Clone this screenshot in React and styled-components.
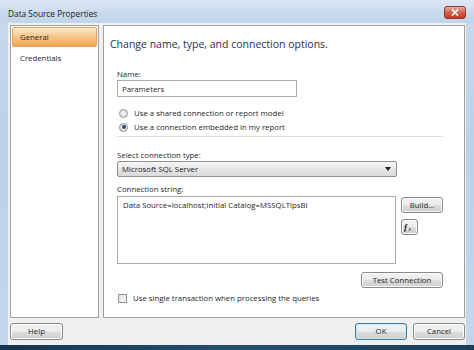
import React from "react";
import styled, { createGlobalStyle } from "styled-components";

const Global = createGlobalStyle`
  html, body { margin: 0; padding: 0; background: #1f3a52; }
  body { font-family: "Open Sans", "Noto Sans", sans-serif; }
`;

const Window = styled.div`
  width: 474px;
  height: 350px;
  display: flex;
  flex-direction: column;
  background: linear-gradient(180deg, #c9d9ec 0%, #bcd2ea 40%, #c3d6ec 100%);
  overflow: hidden;
`;

const TitleBar = styled.div`
  height: 23px;
  display: flex;
  align-items: center;
  justify-content: space-between;
  padding: 0 8px 0 8px;
  background: linear-gradient(180deg, #dde8f4 0%, #c9d9eb 60%, #c1d4e9 100%);
  box-sizing: border-box;
`;

const Title = styled.span`
  font-size: 8.3px;
  color: #1b1b1b;
  margin-top: 3px;
`;

const CloseBtn = styled.div`
  width: 20px;
  height: 11px;
  margin-top: 2px;
  border-radius: 3px;
  border: 1px solid #8c3a32;
  background: linear-gradient(180deg, #e8a89c 0%, #d4624f 50%, #c0392b 100%);
  display: flex;
  align-items: center;
  justify-content: center;
`;

const Client = styled.div`
  flex: 1;
  margin: 0 8px;
  background: #f0f0f0;
  display: flex;
  flex-direction: column;
  padding: 2px 1px 0 2px;
  box-sizing: border-box;
`;

const MainRow = styled.div`
  display: flex;
  gap: 4px;
  height: 293px;
`;

const Sidebar = styled.div`
  width: 90px;
  background: #fff;
  border: 1px solid #a0a0a0;
  box-sizing: border-box;
  padding: 1px;
  display: flex;
  flex-direction: column;
`;

const NavItem = styled.div`
  height: 18px;
  display: flex;
  align-items: center;
  padding-left: 7px;
  font-size: 7.8px;
  color: #1e1e1e;
  border: 1px solid ${(p) => (p.$active ? "#e3a15c" : "transparent")};
  border-radius: 2px;
  background: ${(p) =>
    p.$active
      ? "linear-gradient(180deg, #fdebd2 0%, #f9c98e 45%, #f4a452 100%)"
      : "transparent"};
  margin-bottom: 1px;
`;

const Content = styled.div`
  flex: 1;
  background: #fff;
  border: 1px solid #a0a0a0;
  box-sizing: border-box;
  padding: 10px 0 0 6px;
  display: flex;
  flex-direction: column;
`;

const Heading = styled.div`
  font-size: 10.5px;
  color: #1e3250;
  height: 16px;
  line-height: 16px;
`;

const Form = styled.div`
  padding-left: 7px;
  padding-right: 21px;
  display: flex;
  flex-direction: column;
`;

const Label = styled.div`
  font-size: 7.8px;
  color: #1e1e1e;
  height: 10px;
  line-height: 10px;
  margin-top: ${(p) => p.$mt || 0}px;
  margin-bottom: ${(p) => p.$mb || 1}px;
`;

const TextBox = styled.div`
  width: 180px;
  height: 17px;
  border: 1px solid #abadb3;
  box-sizing: border-box;
  font-size: 7.8px;
  padding-left: 4px;
  display: flex;
  align-items: center;
  color: #1e1e1e;
`;

const RadioRow = styled.div`
  display: flex;
  align-items: center;
  height: 14px;
  font-size: 7.8px;
  color: #1e1e1e;
  gap: 6px;
  margin-top: ${(p) => p.$mt || 0}px;
  padding-left: 2px;
`;

const RadioDot = styled.span`
  width: 9px;
  height: 9px;
  border-radius: 50%;
  border: 1px solid #8e8f8f;
  box-sizing: border-box;
  background: radial-gradient(circle, #f4f4f4 0%, #dcdcdc 100%);
  display: flex;
  align-items: center;
  justify-content: center;
  &::after {
    content: "";
    width: 4px;
    height: 4px;
    border-radius: 50%;
    background: ${(p) => (p.$checked ? "#2a4c74" : "transparent")};
  }
`;

const Separator = styled.div`
  height: 1px;
  background: #d5dfe5;
  margin-top: 2px;
`;

const Select = styled.div`
  width: 280px;
  height: 16px;
  border: 1px solid #8e8f8f;
  box-sizing: border-box;
  border-radius: 2px;
  background: linear-gradient(180deg, #f6f6f6 0%, #e6e6e6 50%, #dadada 100%);
  font-size: 7.8px;
  color: #1e1e1e;
  display: flex;
  align-items: center;
  justify-content: space-between;
  padding: 0 5px 0 4px;
`;

const ConnRow = styled.div`
  display: flex;
  gap: 5px;
  align-items: flex-start;
`;

const TextArea = styled.div`
  width: 279px;
  height: 68px;
  border: 1px solid #abadb3;
  box-sizing: border-box;
  font-size: 7.8px;
  color: #1e1e1e;
  padding: 3px 5px;
`;

const SideButtons = styled.div`
  display: flex;
  flex-direction: column;
  gap: 6px;
  padding-top: 1px;
`;

const Button = styled.button`
  width: ${(p) => p.$w}px;
  height: ${(p) => p.$h || 17}px;
  padding: 0;
  font-family: inherit;
  font-size: 7.8px;
  color: #1e1e1e;
  border: 1px solid ${(p) => (p.$default ? "#3d7bad" : "#8a8a8a")};
  border-radius: 3px;
  background: linear-gradient(180deg, #f3f3f3 0%, #ebebeb 50%, #dddddd 51%, #cfcfcf 100%);
  box-shadow: inset 0 0 0 1px ${(p) => (p.$default ? "#c8e6f8" : "#fbfbfb")};
  display: flex;
  align-items: center;
  justify-content: center;
`;

const TestRow = styled.div`
  display: flex;
  justify-content: flex-end;
  margin-top: 8px;
`;

const CheckRow = styled.div`
  display: flex;
  align-items: center;
  gap: 6px;
  height: 12px;
  font-size: 7.8px;
  color: #1e1e1e;
  margin-top: 4px;
  padding-left: 1px;
`;

const CheckBox = styled.span`
  width: 9px;
  height: 9px;
  border: 1px solid #8e8f8f;
  box-sizing: border-box;
  background: linear-gradient(135deg, #e2e2e2, #f8f8f8);
`;

const Footer = styled.div`
  display: flex;
  align-items: center;
  justify-content: space-between;
  height: 24px;
  margin-top: 1px;
`;

const FooterRight = styled.div`
  display: flex;
  gap: 6px;
`;

const Taskbar = styled.div`
  height: 5px;
  background: linear-gradient(90deg, #17344d, #23506f 50%, #1c3d58);
`;

export default function App() {
  return (
    <>
      <Global />
      <Window>
        <TitleBar>
          <Title>Data Source Properties</Title>
          <CloseBtn>
            <svg width="8" height="7" viewBox="0 0 8 7">
              <path d="M1 0.5 L7 6.5 M7 0.5 L1 6.5" stroke="#fff" strokeWidth="1.6" />
            </svg>
          </CloseBtn>
        </TitleBar>
        <Client>
          <MainRow>
            <Sidebar>
              <NavItem $active>General</NavItem>
              <NavItem>Credentials</NavItem>
            </Sidebar>
            <Content>
              <Heading>Change name, type, and connection options.</Heading>
              <Form>
                <Label $mt={17}>Name:</Label>
                <TextBox>Parameters</TextBox>
                <RadioRow $mt={9}>
                  <RadioDot />
                  Use a shared connection or report model
                </RadioRow>
                <RadioRow>
                  <RadioDot $checked />
                  Use a connection embedded in my report
                </RadioRow>
                <Separator />
                <Label $mt={13}>Select connection type:</Label>
                <Select>
                  <span>Microsoft SQL Server</span>
                  <svg width="6" height="4" viewBox="0 0 6 4">
                    <path d="M0 0 H6 L3 4 Z" fill="#1e1e1e" />
                  </svg>
                </Select>
                <Label $mt={7} $mb={2}>Connection string:</Label>
                <ConnRow>
                  <TextArea>Data Source=localhost;Initial Catalog=MSSQLTipsBI</TextArea>
                  <SideButtons>
                    <Button $w={42} $h={16}>Build...</Button>
                    <Button $w={17} $h={16}>
                      <svg width="11" height="10" viewBox="0 0 11 10">
                        <text x="0" y="8" fontFamily="Liberation Serif, serif" fontStyle="italic" fontWeight="bold" fontSize="9" fill="#1e1e1e">f</text>
                        <text x="4.5" y="9" fontFamily="Liberation Serif, serif" fontStyle="italic" fontSize="5.5" fill="#1e1e1e">x</text>
                      </svg>
                    </Button>
                  </SideButtons>
                </ConnRow>
                <TestRow>
                  <Button $w={82} $h={16}>Test Connection</Button>
                </TestRow>
                <CheckRow>
                  <CheckBox />
                  Use single transaction when processing the queries
                </CheckRow>
              </Form>
            </Content>
          </MainRow>
          <Footer>
            <Button $w={53}>Help</Button>
            <FooterRight>
              <Button $w={52} $default>OK</Button>
              <Button $w={52}>Cancel</Button>
            </FooterRight>
          </Footer>
        </Client>
        <Taskbar />
      </Window>
    </>
  );
}
